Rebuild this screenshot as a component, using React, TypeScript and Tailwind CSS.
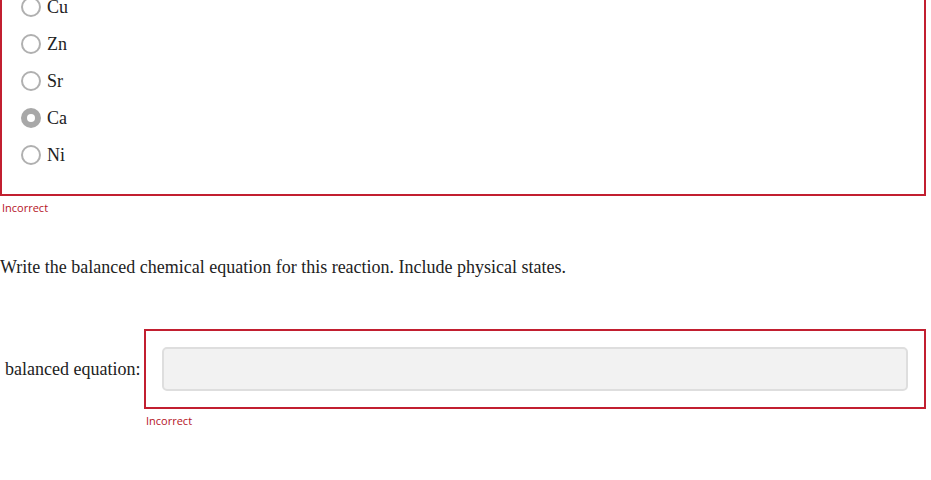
import React from 'react';

const options = ['Cu', 'Zn', 'Sr', 'Ca', 'Ni'];

function Radio({ checked }: { checked: boolean }) {
  if (checked) {
    return (
      <span className="flex h-[20px] w-[20px] items-center justify-center rounded-full bg-[#a8a8a8]">
        <span className="h-[8px] w-[8px] rounded-full bg-white" />
      </span>
    );
  }
  return <span className="h-[20px] w-[20px] rounded-full border-2 border-[#b0b0b0] bg-white" />;
}

export default function App() {
  return (
    <div className="min-h-[480px] w-[931px] bg-white font-['Liberation_Serif',serif] text-[18px] leading-[26px] text-[#222]">
      <div className="-mt-[14px] mr-[5px] border-2 border-[#c21f30] pb-[21px]">
        {options.map((o) => (
          <div key={o} className="flex h-[37px] items-center gap-[6px] pl-[19px]">
            <Radio checked={o === 'Ca'} />
            <span>{o}</span>
          </div>
        ))}
      </div>
      <div className="mt-[4px] pl-[2px] font-['Open_Sans',sans-serif] text-[11px] leading-[16px] text-[#b5141f]">Incorrect</div>

      <p className="mt-[38px]">Write the balanced chemical equation for this reaction. Include physical states.</p>

      <div className="mt-[49px] flex items-center">
        <span className="w-[144px] pl-[5px]">balanced equation:</span>
        <div className="mr-[5px] flex-1 border-2 border-[#c21f30] px-[16px] py-[16px]">
          <div className="h-[44px] rounded-[5px] border-2 border-[#dedede] bg-[#f2f2f2]" />
        </div>
      </div>
      <div className="mt-[4px] pl-[146px] font-['Open_Sans',sans-serif] text-[11px] leading-[16px] text-[#b5141f]">Incorrect</div>
    </div>
  );
}
